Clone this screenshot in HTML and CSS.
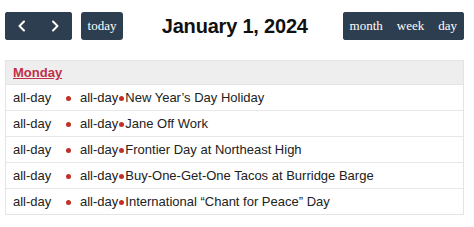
FILE: index.html
```html
<!DOCTYPE html>
<html>
<head>
    <link rel="stylesheet" href="styles.css">
</head>
<body>
    <div class="calendar">
        <div class="toolbar">
            <div class="chunk">
                <div class="btn-group">
                    <button class="btn icon-btn" aria-label="prev">
                        <svg width="10" height="12" viewBox="0 0 10 12"><path d="M7 1.5 L2.5 6 L7 10.5" fill="none" stroke="#fff" stroke-width="2" stroke-linecap="round" stroke-linejoin="round"/></svg>
                    </button>
                    <button class="btn icon-btn" aria-label="next">
                        <svg width="10" height="12" viewBox="0 0 10 12"><path d="M3 1.5 L7.5 6 L3 10.5" fill="none" stroke="#fff" stroke-width="2" stroke-linecap="round" stroke-linejoin="round"/></svg>
                    </button>
                </div>
                <button class="btn today">today</button>
            </div>
            <h2 class="title">January 1, 2024</h2>
            <div class="btn-group">
                <button class="btn">month</button>
                <button class="btn">week</button>
                <button class="btn">day</button>
            </div>
        </div>

        <div class="list">
            <div class="day-head"><a href="#">Monday</a></div>
            <div class="row">
                <span class="time">all-day</span>
                <span class="dot-cell"><i class="dot"></i></span>
                <span class="title-cell">all-day<i class="dot"></i>New Year’s Day Holiday</span>
            </div>
            <div class="row">
                <span class="time">all-day</span>
                <span class="dot-cell"><i class="dot"></i></span>
                <span class="title-cell">all-day<i class="dot"></i>Jane Off Work</span>
            </div>
            <div class="row">
                <span class="time">all-day</span>
                <span class="dot-cell"><i class="dot"></i></span>
                <span class="title-cell">all-day<i class="dot"></i>Frontier Day at Northeast High</span>
            </div>
            <div class="row">
                <span class="time">all-day</span>
                <span class="dot-cell"><i class="dot"></i></span>
                <span class="title-cell">all-day<i class="dot"></i>Buy-One-Get-One Tacos at Burridge Barge</span>
            </div>
            <div class="row">
                <span class="time">all-day</span>
                <span class="dot-cell"><i class="dot"></i></span>
                <span class="title-cell">all-day<i class="dot"></i>International “Chant for Peace” Day</span>
            </div>
        </div>
    </div>
</body>
</html>
```

FILE: styles.css
```css
body {
    margin: 0;
    background: #fff;
    font-family: "Liberation Sans", Arial, sans-serif;
    color: #222;
}

.calendar {
    padding: 12px 10px 0 5px;
}

.toolbar {
    display: flex;
    justify-content: space-between;
    align-items: center;
    margin-bottom: 20px;
}

.chunk {
    display: flex;
    align-items: center;
    gap: 9px;
}

.btn-group {
    display: flex;
    background: #2c3e50;
    border-radius: 3px;
}

.btn {
    height: 28px;
    padding: 0 7px;
    border: 0;
    border-radius: 3px;
    background: #2c3e50;
    color: #fff;
    font-family: "Liberation Serif", "Times New Roman", serif;
    font-size: 13px;
    display: flex;
    align-items: center;
    justify-content: center;
}

.icon-btn {
    width: 33.5px;
    padding: 0;
}

.today {
    width: 42px;
    padding: 0;
}

.title {
    margin: 0 0 0 4px;
    font-family: "Liberation Sans", Arial, sans-serif;
    font-size: 20px;
    font-weight: bold;
    color: #111;
    letter-spacing: -0.2px;
}

.list {
    border: 1px solid #e4e4e4;
    font-size: 13px;
}

.day-head {
    background: #eee;
    height: 23px;
    display: flex;
    align-items: center;
    padding-left: 7px;
    border-bottom: 1px solid #e4e4e4;
}

.day-head a {
    color: #c03048;
    font-weight: bold;
    text-decoration: underline;
}

.row {
    display: grid;
    grid-template-columns: 53px 14px 1fr;
    align-items: center;
    height: 25px;
    padding-left: 7px;
    border-bottom: 1px solid #e8e8e8;
}

.row:last-child {
    border-bottom: 0;
}

.dot {
    display: inline-block;
    width: 5px;
    height: 5px;
    border-radius: 50%;
    background: #c0302a;
    vertical-align: middle;
}

.title-cell .dot {
    margin: 0 1px 0 1px;
}
```
